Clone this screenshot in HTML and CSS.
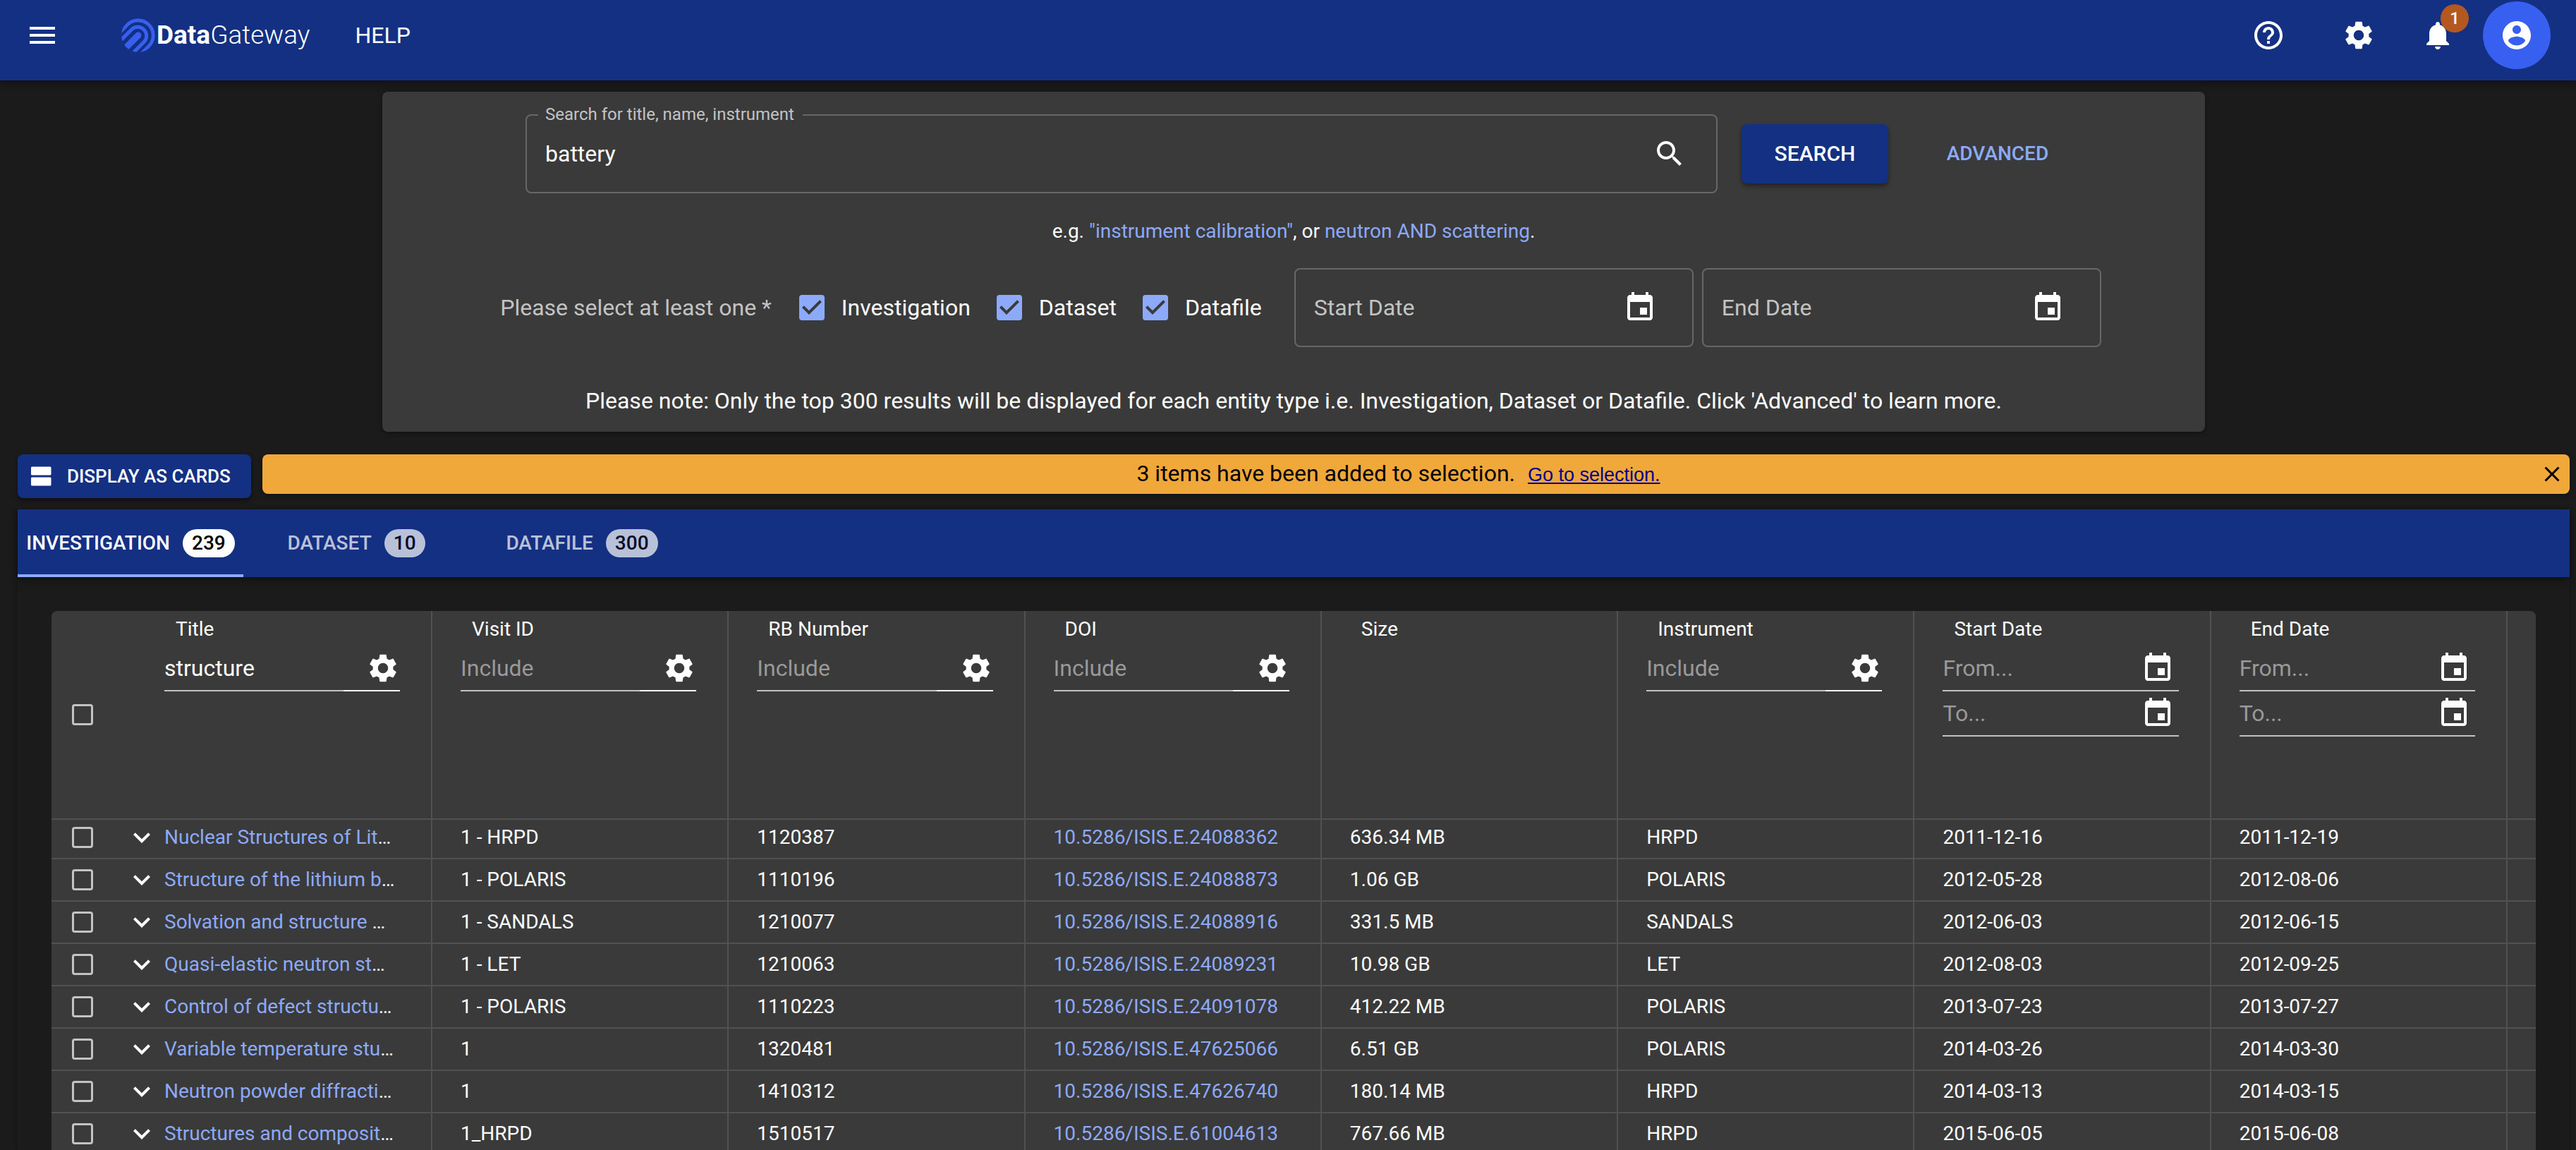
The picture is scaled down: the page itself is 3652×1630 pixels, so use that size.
FILE: index.html
```html
<!DOCTYPE html>
<html lang="en">
<head>
    <meta charset="UTF-8">
    <meta name="viewport" content="width=device-width, initial-scale=1.0">
    <title>DataGateway</title>
    <link rel="stylesheet" href="styles.css">
</head>
<body>
    <!-- Shared icons -->
    <svg class="sprite" aria-hidden="true">
        <symbol id="menu" viewBox="0 0 24 24"><path d="M3 18h18v-2H3v2zm0-5h18v-2H3v2zm0-7v2h18V6H3z"/></symbol>
        <symbol id="help" viewBox="0 0 24 24"><path d="M11 18h2v-2h-2v2zm1-16C6.48 2 2 6.48 2 12s4.480 10 10 10 10-4.480 10-10S17.520 2 12 2zm0 18c-4.410 0-8-3.590-8-8s3.590-8 8-8 8 3.590 8 8-3.590 8-8 8zm0-14c-2.210 0-4 1.790-4 4h2c0-1.100.9-2 2-2s2 .9 2 2c0 2-3 1.750-3 5h2c0-2.250 3-2.500 3-5 0-2.210-1.790-4-4-4z"/></symbol>
        <symbol id="gear" viewBox="0 0 24 24"><path d="M19.140 12.940c.04-.3.06-.61.06-.94 0-.32-.02-.64-.07-.94l2.030-1.580c.18-.14.23-.41.12-.61l-1.920-3.320c-.12-.22-.37-.29-.59-.22l-2.390.96c-.5-.38-1.030-.7-1.620-.94l-.36-2.540c-.04-.24-.24-.41-.48-.41h-3.840c-.24 0-.43.17-.47.41l-.36 2.540c-.59.24-1.130.57-1.620.94l-2.390-.96c-.22-.08-.47 0-.59.22L2.740 8.870c-.12.21-.08.47.12.61l2.030 1.580c-.05.3-.09.63-.09.94s.02.64.07.94l-2.030 1.580c-.18.14-.23.41-.12.61l1.920 3.320c.12.22.37.29.59.22l2.390-.96c.5.38 1.030.7 1.620.94l.36 2.540c.05.24.24.41.48.41h3.840c.24 0 .44-.17.47-.41l.36-2.540c.59-.24 1.130-.56 1.620-.94l2.390.96c.22.08.47 0 .59-.22l1.920-3.320c.12-.22.07-.47-.12-.61l-2.010-1.580zM12 15.600c-1.980 0-3.600-1.620-3.600-3.600s1.620-3.600 3.600-3.600 3.600 1.620 3.600 3.600-1.620 3.600-3.600 3.600z"/></symbol>
        <symbol id="bell" viewBox="0 0 24 24"><path d="M12 22c1.100 0 2-.9 2-2h-4c0 1.100.89 2 2 2zm6-6v-5c0-3.070-1.640-5.640-4.500-6.320V4c0-.83-.67-1.500-1.500-1.500s-1.500.67-1.500 1.500v.68C7.630 5.360 6 7.920 6 11v5l-2 2v1h16v-1l-2-2z"/></symbol>
        <symbol id="account" viewBox="0 0 24 24"><path d="M12 2C6.480 2 2 6.480 2 12s4.480 10 10 10 10-4.480 10-10S17.520 2 12 2zm0 3c1.660 0 3 1.340 3 3s-1.340 3-3 3-3-1.340-3-3 1.340-3 3-3zm0 14.200c-2.500 0-4.710-1.280-6-3.220.03-1.990 4-3.080 6-3.080 1.990 0 5.970 1.090 6 3.080-1.290 1.940-3.500 3.220-6 3.220z"/></symbol>
        <symbol id="search" viewBox="0 0 24 24"><path d="M15.500 14h-.79l-.28-.27C15.410 12.590 16 11.110 16 9.500 16 5.910 13.090 3 9.500 3S3 5.910 3 9.500 5.910 16 9.500 16c1.610 0 3.090-.59 4.230-1.570l.27.28v.79l5 4.990L20.490 19l-4.990-5zm-6 0C7.010 14 5 11.990 5 9.500S7.010 5 9.500 5 14 7.010 14 9.500 11.990 14 9.500 14z"/></symbol>
        <symbol id="calendar" viewBox="0 0 24 24"><path d="M17 12h-5v5h5v-5zM16 1v2H8V1H6v2H5c-1.110 0-1.990.9-1.990 2L3 19c0 1.100.89 2 2 2h14c1.100 0 2-.9 2-2V5c0-1.100-.9-2-2-2h-1V1h-2zm3 18H5V8h14v11z"/></symbol>
        <symbol id="cards" viewBox="0 0 24 24"><path d="M20 13H3c-.55 0-1 .45-1 1v6c0 .55.45 1 1 1h17c.55 0 1-.45 1-1v-6c0-.55-.45-1-1-1zm0-10H3c-.55 0-1 .45-1 1v6c0 .55.45 1 1 1h17c.55 0 1-.45 1-1V4c0-.55-.45-1-1-1z"/></symbol>
        <symbol id="close" viewBox="0 0 24 24"><path d="M19 6.410L17.590 5 12 10.590 6.410 5 5 6.410 10.590 12 5 17.590 6.410 19 12 13.410 17.590 19 19 17.590 13.410 12z"/></symbol>
        <symbol id="expand" viewBox="0 0 24 24"><path d="M16.590 8.590L12 13.170 7.410 8.590 6 10l6 6 6-6z"/></symbol>
        <symbol id="tick" viewBox="0 0 18 18"><path d="M7 14L2 9l1.410-1.410L7 11.170l7.590-7.590L16 5z"/></symbol>
    </svg>

    <header class="topbar">
        <button class="icon-btn" aria-label="Open navigation menu"><svg class="icon"><use href="#menu"/></svg></button>
        <a class="logo" href="#">
            <svg class="logo-mark" viewBox="0 0 48 48">
                <clipPath id="disc"><circle cx="24" cy="24" r="24"/></clipPath>
                <g clip-path="url(#disc)" fill="none" stroke="#3860f0">
                    <path stroke-width="5" d="M-6 23.600L8.800 8.800A21.500 21.500 0 0 1 39.200 39.200L24 54.400"/>
                    <path stroke-width="5" d="M0 30.400L15.200 15.200A12.500 12.500 0 0 1 32.800 32.800L14 51.600"/>
                    <path stroke-width="9" stroke-linecap="round" d="M24 24L0 48"/>
                </g>
            </svg>
            <span class="logo-text"><b>Data</b>Gateway</span>
        </a>
        <a class="nav-link" href="#">HELP</a>
        <div class="topbar-actions">
            <button class="icon-btn" aria-label="Help"><svg class="icon"><use href="#help"/></svg></button>
            <button class="icon-btn settings" aria-label="Settings"><svg class="icon"><use href="#gear"/></svg></button>
            <button class="icon-btn bell" aria-label="Notifications"><svg class="icon"><use href="#bell"/></svg><span class="badge">1</span></button>
            <button class="avatar" aria-label="User menu"><svg class="icon"><use href="#account"/></svg></button>
        </div>
    </header>

    <main class="content">
        <form class="search-card">
            <div class="search-row">
                <div class="outlined search-field">
                    <label for="searchText">Search for title, name, instrument</label>
                    <input id="searchText" type="text" value="battery">
                    <button type="button" class="icon-btn" aria-label="Search"><svg class="icon"><use href="#search"/></svg></button>
                </div>
                <button type="button" class="btn btn-search">SEARCH</button>
                <a class="advanced" href="#">ADVANCED</a>
            </div>
            <p class="examples">e.g. <a href="#">"instrument calibration"</a>, or <a href="#">neutron AND scattering</a>.</p>
            <div class="filter-row">
                <span class="hint">Please select at least one *</span>
                <div class="checks">
                    <label class="check"><input type="checkbox" checked><svg><use href="#tick"/></svg>Investigation</label>
                    <label class="check"><input type="checkbox" checked><svg><use href="#tick"/></svg>Dataset</label>
                    <label class="check"><input type="checkbox" checked><svg><use href="#tick"/></svg>Datafile</label>
                </div>
                <div class="dates">
                    <div class="outlined date-field">
                        <input type="text" placeholder="Start Date" aria-label="Start Date">
                        <button type="button" class="icon-btn" aria-label="Choose start date"><svg class="icon"><use href="#calendar"/></svg></button>
                    </div>
                    <div class="outlined date-field">
                        <input type="text" placeholder="End Date" aria-label="End Date">
                        <button type="button" class="icon-btn" aria-label="Choose end date"><svg class="icon"><use href="#calendar"/></svg></button>
                    </div>
                </div>
            </div>
            <p class="note">Please note: Only the top 300 results will be displayed for each entity type i.e. Investigation, Dataset or Datafile. Click 'Advanced' to learn more.</p>
        </form>

        <div class="actions">
            <button class="btn btn-cards"><svg><use href="#cards"/></svg>DISPLAY AS CARDS</button>
            <div class="banner">
                <p>3 items have been added to selection. <a href="#">Go to selection.</a></p>
                <button class="close-btn" aria-label="Dismiss"><svg><use href="#close"/></svg></button>
            </div>
        </div>

        <section class="results">
            <nav class="tabs">
                <button class="tab active">INVESTIGATION <span class="count">239</span></button>
                <button class="tab">DATASET <span class="count">10</span></button>
                <button class="tab">DATAFILE <span class="count">300</span></button>
            </nav>

            <div class="table-wrap">
                <table>
                    <colgroup>
                        <col class="col-check"><col class="col-expand"><col class="col-title">
                        <col><col><col><col><col><col><col>
                        <col class="col-end">
                    </colgroup>
                    <thead>
                        <tr>
                            <th class="plain middle"><input class="box" type="checkbox" aria-label="Select all rows"></th>
                            <th class="plain"></th>
                            <th class="title">
                                <div class="th-label">Title</div>
                                <div class="text-filter"><input type="text" value="structure" aria-label="Filter by title"><button aria-label="Title filter options"><svg class="icon"><use href="#gear"/></svg></button></div>
                            </th>
                            <th>
                                <div class="th-label">Visit ID</div>
                                <div class="text-filter"><input type="text" placeholder="Include" aria-label="Filter by visit ID"><button aria-label="Visit ID filter options"><svg class="icon"><use href="#gear"/></svg></button></div>
                            </th>
                            <th>
                                <div class="th-label">RB Number</div>
                                <div class="text-filter"><input type="text" placeholder="Include" aria-label="Filter by RB number"><button aria-label="RB number filter options"><svg class="icon"><use href="#gear"/></svg></button></div>
                            </th>
                            <th>
                                <div class="th-label">DOI</div>
                                <div class="text-filter"><input type="text" placeholder="Include" aria-label="Filter by DOI"><button aria-label="DOI filter options"><svg class="icon"><use href="#gear"/></svg></button></div>
                            </th>
                            <th>
                                <div class="th-label">Size</div>
                            </th>
                            <th>
                                <div class="th-label">Instrument</div>
                                <div class="text-filter"><input type="text" placeholder="Include" aria-label="Filter by instrument"><button aria-label="Instrument filter options"><svg class="icon"><use href="#gear"/></svg></button></div>
                            </th>
                            <th>
                                <div class="th-label">Start Date</div>
                                <div class="date-filter"><input type="text" placeholder="From..." aria-label="Start date from"><button aria-label="Choose start date from"><svg class="icon"><use href="#calendar"/></svg></button></div>
                                <div class="date-filter"><input type="text" placeholder="To..." aria-label="Start date to"><button aria-label="Choose start date to"><svg class="icon"><use href="#calendar"/></svg></button></div>
                            </th>
                            <th>
                                <div class="th-label">End Date</div>
                                <div class="date-filter"><input type="text" placeholder="From..." aria-label="End date from"><button aria-label="Choose end date from"><svg class="icon"><use href="#calendar"/></svg></button></div>
                                <div class="date-filter"><input type="text" placeholder="To..." aria-label="End date to"><button aria-label="Choose end date to"><svg class="icon"><use href="#calendar"/></svg></button></div>
                            </th>
                            <th class="plain"></th>
                        </tr>
                    </thead>
                    <tbody>
                        <tr>
                            <td class="plain"><input class="box" type="checkbox" aria-label="Select row"></td>
                            <td class="plain"><button class="expand" aria-label="Show details"><svg class="icon"><use href="#expand"/></svg></button></td>
                            <td class="title"><a href="#">Nuclear Structures of Lit</a>…</td>
                            <td>1 - HRPD</td><td>1120387</td><td><a href="#">10.5286/ISIS.E.24088362</a></td><td>636.34 MB</td><td>HRPD</td><td>2011-12-16</td><td>2011-12-19</td><td class="plain"></td>
                        </tr>
                        <tr>
                            <td class="plain"><input class="box" type="checkbox" aria-label="Select row"></td>
                            <td class="plain"><button class="expand" aria-label="Show details"><svg class="icon"><use href="#expand"/></svg></button></td>
                            <td class="title"><a href="#">Structure of the lithium b</a>…</td>
                            <td>1 - POLARIS</td><td>1110196</td><td><a href="#">10.5286/ISIS.E.24088873</a></td><td>1.06 GB</td><td>POLARIS</td><td>2012-05-28</td><td>2012-08-06</td><td class="plain"></td>
                        </tr>
                        <tr>
                            <td class="plain"><input class="box" type="checkbox" aria-label="Select row"></td>
                            <td class="plain"><button class="expand" aria-label="Show details"><svg class="icon"><use href="#expand"/></svg></button></td>
                            <td class="title"><a href="#">Solvation and structure </a>…</td>
                            <td>1 - SANDALS</td><td>1210077</td><td><a href="#">10.5286/ISIS.E.24088916</a></td><td>331.5 MB</td><td>SANDALS</td><td>2012-06-03</td><td>2012-06-15</td><td class="plain"></td>
                        </tr>
                        <tr>
                            <td class="plain"><input class="box" type="checkbox" aria-label="Select row"></td>
                            <td class="plain"><button class="expand" aria-label="Show details"><svg class="icon"><use href="#expand"/></svg></button></td>
                            <td class="title"><a href="#">Quasi-elastic neutron st</a>…</td>
                            <td>1 - LET</td><td>1210063</td><td><a href="#">10.5286/ISIS.E.24089231</a></td><td>10.98 GB</td><td>LET</td><td>2012-08-03</td><td>2012-09-25</td><td class="plain"></td>
                        </tr>
                        <tr>
                            <td class="plain"><input class="box" type="checkbox" aria-label="Select row"></td>
                            <td class="plain"><button class="expand" aria-label="Show details"><svg class="icon"><use href="#expand"/></svg></button></td>
                            <td class="title"><a href="#">Control of defect structu</a>…</td>
                            <td>1 - POLARIS</td><td>1110223</td><td><a href="#">10.5286/ISIS.E.24091078</a></td><td>412.22 MB</td><td>POLARIS</td><td>2013-07-23</td><td>2013-07-27</td><td class="plain"></td>
                        </tr>
                        <tr>
                            <td class="plain"><input class="box" type="checkbox" aria-label="Select row"></td>
                            <td class="plain"><button class="expand" aria-label="Show details"><svg class="icon"><use href="#expand"/></svg></button></td>
                            <td class="title"><a href="#">Variable temperature stu</a>…</td>
                            <td>1</td><td>1320481</td><td><a href="#">10.5286/ISIS.E.47625066</a></td><td>6.51 GB</td><td>POLARIS</td><td>2014-03-26</td><td>2014-03-30</td><td class="plain"></td>
                        </tr>
                        <tr>
                            <td class="plain"><input class="box" type="checkbox" aria-label="Select row"></td>
                            <td class="plain"><button class="expand" aria-label="Show details"><svg class="icon"><use href="#expand"/></svg></button></td>
                            <td class="title"><a href="#">Neutron powder diffracti</a>…</td>
                            <td>1</td><td>1410312</td><td><a href="#">10.5286/ISIS.E.47626740</a></td><td>180.14 MB</td><td>HRPD</td><td>2014-03-13</td><td>2014-03-15</td><td class="plain"></td>
                        </tr>
                        <tr>
                            <td class="plain"><input class="box" type="checkbox" aria-label="Select row"></td>
                            <td class="plain"><button class="expand" aria-label="Show details"><svg class="icon"><use href="#expand"/></svg></button></td>
                            <td class="title"><a href="#">Structures and composit</a>…</td>
                            <td>1_HRPD</td><td>1510517</td><td><a href="#">10.5286/ISIS.E.61004613</a></td><td>767.66 MB</td><td>HRPD</td><td>2015-06-05</td><td>2015-06-08</td><td class="plain"></td>
                        </tr>
                    </tbody>
                </table>
            </div>
        </section>
    </main>
</body>
</html>
```
FILE: styles.css
```css
* {
    box-sizing: border-box;
}

body {
    display: flex;
    flex-direction: column;
    height: 100vh;
    margin: 0;
    overflow: hidden;
    background-color: #1b1b1b;
    color: #fff;
    font-family: Roboto, "Liberation Sans", sans-serif;
    font-size: 28px;
    line-height: 40px;
}

p {
    margin: 0;
}

a {
    color: #8caaf9;
    text-decoration: none;
}

button,
input {
    margin: 0;
    padding: 0;
    border: none;
    background: none;
    color: inherit;
    font: inherit;
    outline: none;
}

svg {
    display: block;
    fill: currentColor;
}

.sprite {
    position: absolute;
    width: 0;
    height: 0;
}

.icon {
    width: 48px;
    height: 48px;
}

.icon-btn {
    flex: none;
}

/* Top bar */
.topbar {
    position: relative;
    display: flex;
    flex: none;
    align-items: center;
    padding: 2px 36px 16px;
    background-color: #143082;
    box-shadow: 0 4px 10px rgba(0, 0, 0, 0.4);
}

.logo {
    display: flex;
    align-items: center;
    gap: 2px;
    margin-left: 88px;
    color: #fff;
}

.logo-mark {
    width: 48px;
    height: 48px;
}

.logo-text {
    font-size: 37px;
    font-weight: 300;
}

.logo-text b {
    font-weight: 700;
}

.nav-link {
    margin-left: 64px;
    color: #fff;
    font-size: 32px;
}

.topbar-actions {
    display: flex;
    align-items: center;
    margin-left: auto;
}

.settings {
    margin-left: 80px;
}

.bell {
    position: relative;
    margin-left: 64px;
}

.badge {
    position: absolute;
    top: -20px;
    right: -20px;
    width: 40px;
    border-radius: 20px;
    background-color: #b45821;
    font-size: 24px;
    font-weight: 500;
    text-align: center;
}

.avatar {
    display: flex;
    align-items: center;
    justify-content: center;
    width: 96px;
    height: 96px;
    margin-left: 40px;
    border-radius: 50%;
    background-color: #3860f0;
}

.content {
    display: flex;
    flex: 1;
    flex-direction: column;
    min-height: 0;
    padding: 16px 9px 0 25px;
}

/* Search card */
.search-card {
    display: flex;
    flex: none;
    flex-direction: column;
    align-items: center;
    width: 100%;
    max-width: 2584px;
    margin: 0 auto 32px;
    padding: 32px 0 20px;
    border-radius: 8px;
    background-color: #3a3a3a;
    box-shadow: 0 2px 6px rgba(0, 0, 0, 0.4);
}

.search-row {
    display: flex;
    align-items: center;
}

.outlined {
    position: relative;
    display: flex;
    align-items: center;
    height: 112px;
    padding: 0 42px 0 26px;
    border: 2px solid #676767;
    border-radius: 8px;
    font-size: 32px;
}

.outlined input {
    flex: 1;
    min-width: 0;
}

.outlined label {
    position: absolute;
    top: -22px;
    left: 16px;
    padding: 0 12px 0 10px;
    background-color: #3a3a3a;
    color: #c3c3c3;
    font-size: 24px;
}

.search-field {
    width: 1690px;
}

.btn {
    border-radius: 8px;
    background-color: #143082;
    box-shadow: 0 4px 6px rgba(0, 0, 0, 0.4);
    font-weight: 500;
}

.btn-search {
    width: 208px;
    margin-left: 34px;
    padding: 22px 0;
    font-size: 30px;
}

.advanced {
    width: 182px;
    margin-left: 64px;
    font-weight: 500;
    text-align: center;
}

.examples {
    margin: 34px 0 32px;
}

.filter-row {
    display: flex;
    align-items: center;
    padding-left: 20px;
    font-size: 32px;
}

.hint {
    color: #c3c3c3;
}

.checks {
    display: flex;
    gap: 37px;
    margin: 0 46px 0 39px;
}

.check {
    display: grid;
    grid-template-columns: 36px auto;
    align-items: center;
    column-gap: 24px;
}

.check input {
    grid-area: 1 / 1;
    width: 36px;
    height: 36px;
    border-radius: 4px;
    appearance: none;
}

.check svg {
    grid-area: 1 / 1;
    width: 36px;
    height: 36px;
    color: #3a3a3a;
    pointer-events: none;
}

.check input:checked {
    background-color: #8caaf9;
}

.dates {
    display: flex;
    gap: 12px;
}

.date-field {
    width: 566px;
    padding-right: 50px;
}

.date-field input::placeholder {
    color: #c3c3c3;
}

.note {
    margin-top: 52px;
    font-size: 32px;
    line-height: 48px;
}

/* View switch and selection banner */
.actions {
    display: flex;
    flex: none;
    align-items: flex-start;
    gap: 16px;
    margin-bottom: 16px;
}

.btn-cards {
    display: flex;
    flex: none;
    align-items: center;
    gap: 18px;
    min-width: 331px;
    padding: 11px 16px;
    font-size: 26px;
}

.btn-cards svg {
    width: 36px;
    height: 36px;
}

.banner {
    display: flex;
    flex: 1;
    align-items: center;
    height: 56px;
    border-radius: 8px;
    background-color: #f0a83a;
    box-shadow: 0 2px 6px rgba(0, 0, 0, 0.4);
    color: #000;
    font-size: 32px;
}

.banner p {
    flex: 1;
    text-align: center;
}

.banner a {
    margin-left: 10px;
    color: #00008b;
    font-family: "Liberation Sans", Arial, sans-serif;
    font-size: 27px;
    text-decoration: underline;
}

.close-btn {
    padding: 0 7px;
}

.close-btn svg {
    width: 36px;
    height: 36px;
}

/* Tabs */
.results {
    display: flex;
    flex: 1;
    flex-direction: column;
    min-height: 0;
    box-shadow: 0 2px 6px rgba(0, 0, 0, 0.3);
}

.tabs {
    display: flex;
    flex: none;
    height: 96px;
    background-color: #143082;
    box-shadow: 0 4px 10px rgba(0, 0, 0, 0.4);
}

.tab {
    display: flex;
    align-items: center;
    justify-content: center;
    gap: 18px;
    width: 320px;
    border-bottom: 4px solid transparent;
    border-top: 4px solid transparent;
    font-weight: 500;
    opacity: 0.7;
}

.tab.active {
    border-bottom-color: #8caaf9;
    opacity: 1;
}

.count {
    padding: 0 13px;
    border-radius: 20px;
    background-color: #fff;
    color: #000;
}

/* Results table */
.table-wrap {
    flex: 1;
    min-height: 0;
    margin: 48px 48px 0;
    overflow: hidden;
    border-radius: 8px 8px 0 0;
    background-color: #3a3a3a;
}

table {
    width: 100%;
    border-spacing: 0;
    table-layout: fixed;
}

.col-check {
    width: 88px;
}

.col-expand {
    width: 72px;
}

.col-title {
    width: 380px;
}

.col-end {
    width: 40px;
}

th,
td {
    padding: 0 44px 0 40px;
    border-right: 2px solid #515151;
    border-bottom: 2px solid #515151;
    font-weight: 400;
    text-align: left;
    white-space: nowrap;
}

th {
    height: 296px;
    padding-top: 6px;
    vertical-align: top;
}

th.middle {
    padding-top: 0;
    vertical-align: middle;
}

td {
    height: 60px;
}

tbody tr:first-child td {
    height: 56px;
    padding-bottom: 4px;
}

.title {
    padding-left: 0;
}

.plain {
    padding-left: 0;
    padding-right: 0;
    border-right: none;
    text-align: center;
}

.th-label {
    padding-left: 16px;
}

.box {
    display: block;
    width: 30px;
    height: 30px;
    margin: 0 auto;
    border: 3px solid #c3c3c3;
    border-radius: 4px;
    appearance: none;
}

.expand {
    display: block;
    margin-left: 16px;
}

.text-filter,
.date-filter {
    display: flex;
    height: 64px;
    font-size: 32px;
}

.text-filter {
    margin-top: 4px;
}

.th-label + .date-filter {
    margin-top: 4px;
}

.text-filter input,
.date-filter input {
    flex: 1;
    min-width: 0;
    border-bottom: 2px solid #c3c3c3;
}

.text-filter input::placeholder,
.date-filter input::placeholder {
    color: #999;
}

.text-filter button {
    display: flex;
    align-items: center;
    justify-content: flex-end;
    width: 80px;
    border-bottom: 2px solid #f5f5f5;
}

.date-filter button {
    padding-right: 6px;
    border-bottom: 2px solid #c3c3c3;
}
```
